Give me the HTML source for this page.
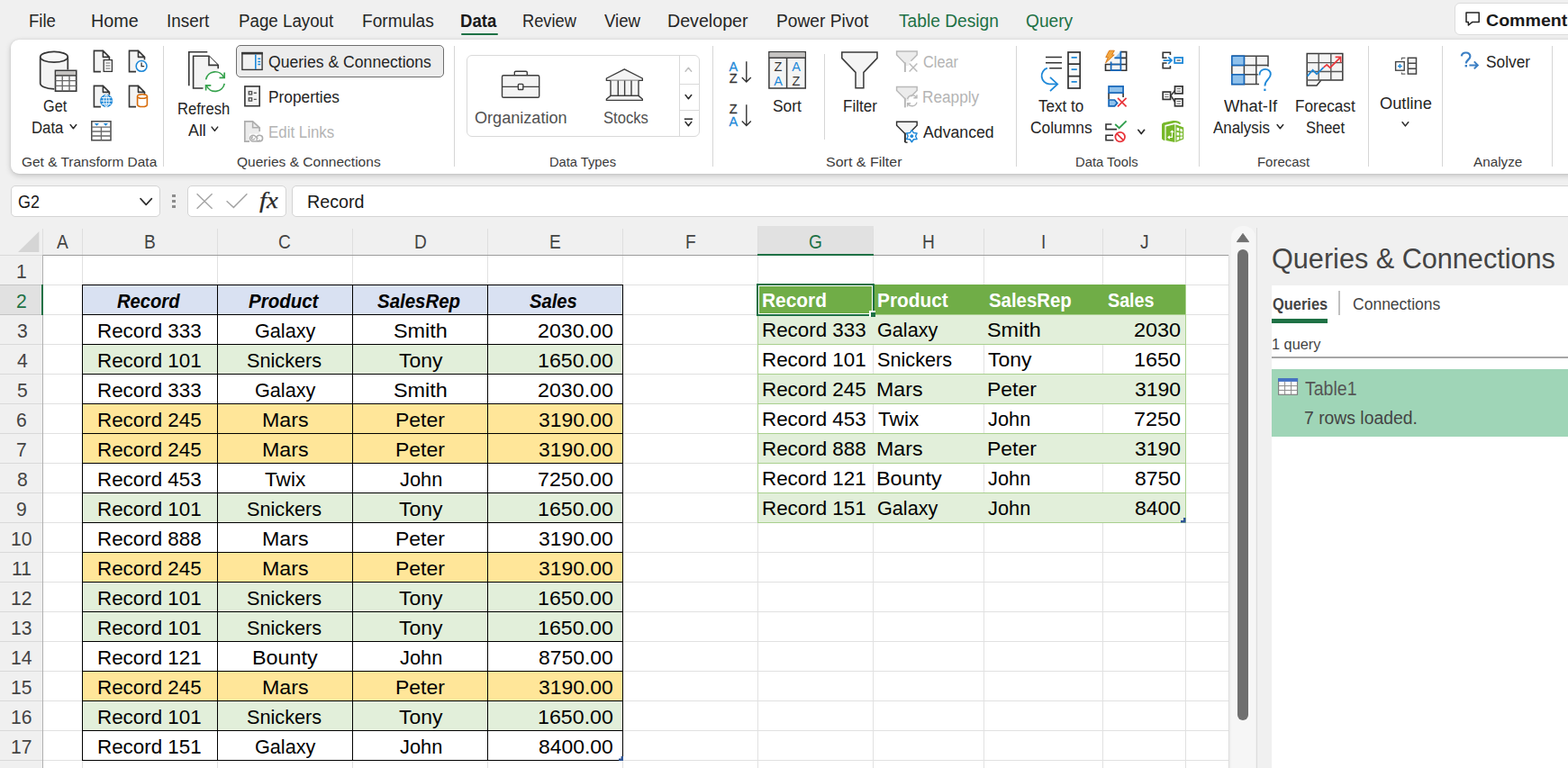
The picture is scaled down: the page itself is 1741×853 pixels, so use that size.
<!DOCTYPE html>
<html><head><meta charset="utf-8"><title>Excel - Queries &amp; Connections</title>
<style>
html,body{margin:0;padding:0;}
body{width:1741px;height:853px;overflow:hidden;background:#f0f0f0;position:relative;font-family:'Liberation Sans',sans-serif;}
.b{position:absolute;}
.t{position:absolute;white-space:nowrap;transform-origin:0 0;}
svg.ic{position:absolute;left:0;top:0;}
</style></head><body>
<div class="b " style="left:12px;top:44px;width:1760px;height:149.4px;background:#fff;border-radius:9px;box-shadow:0 2px 6px rgba(0,0,0,.20),0 0 2px rgba(0,0,0,.10);"></div>
<div class="b " style="left:512px;top:36.5px;width:41px;height:2.6px;background:#1e7145;border-radius:2px;"></div>
<div class="b " style="left:1614.5px;top:3px;width:160px;height:35.5px;background:#fff;border-radius:6px;border:1px solid #dcdcdc;box-sizing:border-box;"></div>
<div class="b " style="left:181px;top:51px;width:1px;height:134px;background:#d6d6d6;"></div>
<div class="b " style="left:504px;top:51px;width:1px;height:134px;background:#d6d6d6;"></div>
<div class="b " style="left:791px;top:51px;width:1px;height:134px;background:#d6d6d6;"></div>
<div class="b " style="left:1128px;top:51px;width:1px;height:134px;background:#d6d6d6;"></div>
<div class="b " style="left:1331px;top:51px;width:1px;height:134px;background:#d6d6d6;"></div>
<div class="b " style="left:1519px;top:51px;width:1px;height:134px;background:#d6d6d6;"></div>
<div class="b " style="left:1601px;top:51px;width:1px;height:134px;background:#d6d6d6;"></div>
<div class="b " style="left:1723px;top:51px;width:1px;height:134px;background:#d6d6d6;"></div>
<div class="b " style="left:914.5px;top:60px;width:1px;height:95px;background:#d6d6d6;"></div>
<div class="b " style="left:262px;top:50px;width:231px;height:35.5px;background:#ececec;border-radius:5px;border:1px solid #6e6e6e;box-sizing:border-box;"></div>
<div class="b " style="left:518px;top:61px;width:258.5px;height:91px;background:#fff;border-radius:6px;border:1px solid #d9d9d9;box-sizing:border-box;"></div>
<div class="b " style="left:753.5px;top:62px;width:1px;height:89.5px;background:#d9d9d9;"></div>
<div class="b " style="left:754px;top:93px;width:21.5px;height:1px;background:#d9d9d9;"></div>
<div class="b " style="left:754px;top:122px;width:21.5px;height:1px;background:#d9d9d9;"></div>
<div class="b " style="left:12.4px;top:206px;width:165.2px;height:34.6px;background:#fff;border-radius:5px;border:1px solid #d4d4d4;box-sizing:border-box;"></div>
<div class="b " style="left:208.2px;top:206px;width:109.6px;height:34.6px;background:#fff;border-radius:5px;border:1px solid #d4d4d4;box-sizing:border-box;"></div>
<div class="b " style="left:324.2px;top:206px;width:1450px;height:34.6px;background:#fff;border-radius:5px;border:1px solid #d4d4d4;box-sizing:border-box;"></div>
<div class="b " style="left:191px;top:216.2px;width:3.8px;height:3px;background:#8c8c8c;"></div>
<div class="b " style="left:191px;top:222.2px;width:3.8px;height:3px;background:#8c8c8c;"></div>
<div class="b " style="left:191px;top:228.2px;width:3.8px;height:3px;background:#8c8c8c;"></div>
<div class="b " style="left:47px;top:283px;width:1317px;height:580px;background:#fff;"></div>
<div class="b " style="left:841px;top:251px;width:129px;height:32px;background:#e1e1e1;"></div>
<div class="b " style="left:0px;top:316px;width:47px;height:33px;background:#e1e1e1;"></div>
<div class="b " style="left:91px;top:283px;width:1px;height:570px;background:#e1e1e1;"></div>
<div class="b " style="left:241px;top:283px;width:1px;height:570px;background:#e1e1e1;"></div>
<div class="b " style="left:391px;top:283px;width:1px;height:570px;background:#e1e1e1;"></div>
<div class="b " style="left:541px;top:283px;width:1px;height:570px;background:#e1e1e1;"></div>
<div class="b " style="left:691px;top:283px;width:1px;height:570px;background:#e1e1e1;"></div>
<div class="b " style="left:841px;top:283px;width:1px;height:570px;background:#e1e1e1;"></div>
<div class="b " style="left:969px;top:283px;width:1px;height:570px;background:#e1e1e1;"></div>
<div class="b " style="left:1092px;top:283px;width:1px;height:570px;background:#e1e1e1;"></div>
<div class="b " style="left:1224px;top:283px;width:1px;height:570px;background:#e1e1e1;"></div>
<div class="b " style="left:1316px;top:283px;width:1px;height:570px;background:#e1e1e1;"></div>
<div class="b " style="left:47px;top:316px;width:1317px;height:1px;background:#e1e1e1;"></div>
<div class="b " style="left:47px;top:349px;width:1317px;height:1px;background:#e1e1e1;"></div>
<div class="b " style="left:47px;top:382px;width:1317px;height:1px;background:#e1e1e1;"></div>
<div class="b " style="left:47px;top:415px;width:1317px;height:1px;background:#e1e1e1;"></div>
<div class="b " style="left:47px;top:448px;width:1317px;height:1px;background:#e1e1e1;"></div>
<div class="b " style="left:47px;top:481px;width:1317px;height:1px;background:#e1e1e1;"></div>
<div class="b " style="left:47px;top:514px;width:1317px;height:1px;background:#e1e1e1;"></div>
<div class="b " style="left:47px;top:547px;width:1317px;height:1px;background:#e1e1e1;"></div>
<div class="b " style="left:47px;top:580px;width:1317px;height:1px;background:#e1e1e1;"></div>
<div class="b " style="left:47px;top:613px;width:1317px;height:1px;background:#e1e1e1;"></div>
<div class="b " style="left:47px;top:646px;width:1317px;height:1px;background:#e1e1e1;"></div>
<div class="b " style="left:47px;top:679px;width:1317px;height:1px;background:#e1e1e1;"></div>
<div class="b " style="left:47px;top:712px;width:1317px;height:1px;background:#e1e1e1;"></div>
<div class="b " style="left:47px;top:745px;width:1317px;height:1px;background:#e1e1e1;"></div>
<div class="b " style="left:47px;top:778px;width:1317px;height:1px;background:#e1e1e1;"></div>
<div class="b " style="left:47px;top:811px;width:1317px;height:1px;background:#e1e1e1;"></div>
<div class="b " style="left:47px;top:844px;width:1317px;height:1px;background:#e1e1e1;"></div>
<div class="b " style="left:47px;top:877px;width:1317px;height:1px;background:#e1e1e1;"></div>
<div class="b " style="left:47px;top:254px;width:1px;height:29px;background:#dedede;"></div>
<div class="b " style="left:91px;top:254px;width:1px;height:29px;background:#dedede;"></div>
<div class="b " style="left:241px;top:254px;width:1px;height:29px;background:#dedede;"></div>
<div class="b " style="left:391px;top:254px;width:1px;height:29px;background:#dedede;"></div>
<div class="b " style="left:541px;top:254px;width:1px;height:29px;background:#dedede;"></div>
<div class="b " style="left:691px;top:254px;width:1px;height:29px;background:#dedede;"></div>
<div class="b " style="left:841px;top:254px;width:1px;height:29px;background:#dedede;"></div>
<div class="b " style="left:969px;top:254px;width:1px;height:29px;background:#dedede;"></div>
<div class="b " style="left:1092px;top:254px;width:1px;height:29px;background:#dedede;"></div>
<div class="b " style="left:1224px;top:254px;width:1px;height:29px;background:#dedede;"></div>
<div class="b " style="left:1316px;top:254px;width:1px;height:29px;background:#dedede;"></div>
<div class="b " style="left:0px;top:283px;width:47px;height:1px;background:#d9d9d9;"></div>
<div class="b " style="left:0px;top:316px;width:47px;height:1px;background:#d9d9d9;"></div>
<div class="b " style="left:0px;top:349px;width:47px;height:1px;background:#d9d9d9;"></div>
<div class="b " style="left:0px;top:382px;width:47px;height:1px;background:#d9d9d9;"></div>
<div class="b " style="left:0px;top:415px;width:47px;height:1px;background:#d9d9d9;"></div>
<div class="b " style="left:0px;top:448px;width:47px;height:1px;background:#d9d9d9;"></div>
<div class="b " style="left:0px;top:481px;width:47px;height:1px;background:#d9d9d9;"></div>
<div class="b " style="left:0px;top:514px;width:47px;height:1px;background:#d9d9d9;"></div>
<div class="b " style="left:0px;top:547px;width:47px;height:1px;background:#d9d9d9;"></div>
<div class="b " style="left:0px;top:580px;width:47px;height:1px;background:#d9d9d9;"></div>
<div class="b " style="left:0px;top:613px;width:47px;height:1px;background:#d9d9d9;"></div>
<div class="b " style="left:0px;top:646px;width:47px;height:1px;background:#d9d9d9;"></div>
<div class="b " style="left:0px;top:679px;width:47px;height:1px;background:#d9d9d9;"></div>
<div class="b " style="left:0px;top:712px;width:47px;height:1px;background:#d9d9d9;"></div>
<div class="b " style="left:0px;top:745px;width:47px;height:1px;background:#d9d9d9;"></div>
<div class="b " style="left:0px;top:778px;width:47px;height:1px;background:#d9d9d9;"></div>
<div class="b " style="left:0px;top:811px;width:47px;height:1px;background:#d9d9d9;"></div>
<div class="b " style="left:0px;top:844px;width:47px;height:1px;background:#d9d9d9;"></div>
<div class="b " style="left:47px;top:283px;width:1317px;height:1px;background:#9b9b9b;"></div>
<div class="b " style="left:47px;top:283px;width:1px;height:570px;background:#b0b0b0;"></div>
<div class="b " style="left:1364px;top:283px;width:1px;height:570px;background:#dcdcdc;"></div>
<div class="b " style="left:0px;top:316px;width:46px;height:1px;background:#c4c4c4;"></div>
<div class="b " style="left:0px;top:349px;width:46px;height:1px;background:#c4c4c4;"></div>
<div class="b " style="left:841px;top:282px;width:129px;height:2px;background:#1e7145;"></div>
<div class="b " style="left:45.5px;top:316px;width:2px;height:34px;background:#1e7145;"></div>
<div class="b " style="left:91px;top:316px;width:601px;height:34px;background:#d9e1f2;"></div>
<div class="b " style="left:91px;top:349px;width:601px;height:34px;background:#ffffff;"></div>
<div class="b " style="left:91px;top:382px;width:601px;height:34px;background:#e2efda;"></div>
<div class="b " style="left:91px;top:415px;width:601px;height:34px;background:#ffffff;"></div>
<div class="b " style="left:91px;top:448px;width:601px;height:34px;background:#ffe699;"></div>
<div class="b " style="left:91px;top:481px;width:601px;height:34px;background:#ffe699;"></div>
<div class="b " style="left:91px;top:514px;width:601px;height:34px;background:#ffffff;"></div>
<div class="b " style="left:91px;top:547px;width:601px;height:34px;background:#e2efda;"></div>
<div class="b " style="left:91px;top:580px;width:601px;height:34px;background:#ffffff;"></div>
<div class="b " style="left:91px;top:613px;width:601px;height:34px;background:#ffe699;"></div>
<div class="b " style="left:91px;top:646px;width:601px;height:34px;background:#e2efda;"></div>
<div class="b " style="left:91px;top:679px;width:601px;height:34px;background:#e2efda;"></div>
<div class="b " style="left:91px;top:712px;width:601px;height:34px;background:#ffffff;"></div>
<div class="b " style="left:91px;top:745px;width:601px;height:34px;background:#ffe699;"></div>
<div class="b " style="left:91px;top:778px;width:601px;height:34px;background:#e2efda;"></div>
<div class="b " style="left:91px;top:811px;width:601px;height:34px;background:#ffffff;"></div>
<div class="b " style="left:91px;top:316px;width:1.3px;height:529px;background:#000;"></div>
<div class="b " style="left:241px;top:316px;width:1.3px;height:529px;background:#000;"></div>
<div class="b " style="left:391px;top:316px;width:1.3px;height:529px;background:#000;"></div>
<div class="b " style="left:541px;top:316px;width:1.3px;height:529px;background:#000;"></div>
<div class="b " style="left:691px;top:316px;width:1.3px;height:529px;background:#000;"></div>
<div class="b " style="left:91px;top:316px;width:601px;height:1.3px;background:#000;"></div>
<div class="b " style="left:91px;top:349px;width:601px;height:1.3px;background:#000;"></div>
<div class="b " style="left:91px;top:382px;width:601px;height:1.3px;background:#000;"></div>
<div class="b " style="left:91px;top:415px;width:601px;height:1.3px;background:#000;"></div>
<div class="b " style="left:91px;top:448px;width:601px;height:1.3px;background:#000;"></div>
<div class="b " style="left:91px;top:481px;width:601px;height:1.3px;background:#000;"></div>
<div class="b " style="left:91px;top:514px;width:601px;height:1.3px;background:#000;"></div>
<div class="b " style="left:91px;top:547px;width:601px;height:1.3px;background:#000;"></div>
<div class="b " style="left:91px;top:580px;width:601px;height:1.3px;background:#000;"></div>
<div class="b " style="left:91px;top:613px;width:601px;height:1.3px;background:#000;"></div>
<div class="b " style="left:91px;top:646px;width:601px;height:1.3px;background:#000;"></div>
<div class="b " style="left:91px;top:679px;width:601px;height:1.3px;background:#000;"></div>
<div class="b " style="left:91px;top:712px;width:601px;height:1.3px;background:#000;"></div>
<div class="b " style="left:91px;top:745px;width:601px;height:1.3px;background:#000;"></div>
<div class="b " style="left:91px;top:778px;width:601px;height:1.3px;background:#000;"></div>
<div class="b " style="left:91px;top:811px;width:601px;height:1.3px;background:#000;"></div>
<div class="b " style="left:91px;top:844px;width:601px;height:1.3px;background:#000;"></div>
<div class="b " style="left:686.5px;top:839.5px;width:5.5px;height:5.5px;background:#2f5597;clip-path:polygon(100% 0,100% 100%,0 100%,0 55%,55% 55%,55% 0);"></div>
<div class="b " style="left:841px;top:316px;width:476px;height:33px;background:#70ad47;"></div>
<div class="b " style="left:841px;top:349px;width:476px;height:33px;background:#e2efda;"></div>
<div class="b " style="left:841px;top:415px;width:476px;height:33px;background:#e2efda;"></div>
<div class="b " style="left:841px;top:481px;width:476px;height:33px;background:#e2efda;"></div>
<div class="b " style="left:841px;top:547px;width:476px;height:33px;background:#e2efda;"></div>
<div class="b " style="left:841px;top:349px;width:476px;height:1px;background:#a9d08e;"></div>
<div class="b " style="left:841px;top:382px;width:476px;height:1px;background:#a9d08e;"></div>
<div class="b " style="left:841px;top:415px;width:476px;height:1px;background:#a9d08e;"></div>
<div class="b " style="left:841px;top:448px;width:476px;height:1px;background:#a9d08e;"></div>
<div class="b " style="left:841px;top:481px;width:476px;height:1px;background:#a9d08e;"></div>
<div class="b " style="left:841px;top:514px;width:476px;height:1px;background:#a9d08e;"></div>
<div class="b " style="left:841px;top:547px;width:476px;height:1px;background:#a9d08e;"></div>
<div class="b " style="left:841px;top:580px;width:476px;height:1px;background:#a9d08e;"></div>
<div class="b " style="left:841px;top:316px;width:1px;height:264px;background:#a9d08e;"></div>
<div class="b " style="left:1316px;top:316px;width:1px;height:265px;background:#a9d08e;"></div>
<div class="b " style="left:840px;top:315px;width:130.6px;height:36px;border:2px solid #1e7145;box-sizing:border-box;box-shadow:inset 0 0 0 1px #fff;"></div>
<div class="b " style="left:965.4px;top:345.4px;width:7px;height:7px;background:#fff;"></div>
<div class="b " style="left:966.5px;top:346.5px;width:5.6px;height:5.6px;background:#1e7145;"></div>
<div class="b " style="left:1311px;top:575px;width:5.5px;height:5.5px;background:#2f5597;clip-path:polygon(100% 0,100% 100%,0 100%,0 55%,55% 55%,55% 0);"></div>
<div class="b " style="left:1367px;top:251px;width:26.5px;height:610px;background:#f6f6f6;border-radius:13px 13px 0 0;"></div>
<div class="b " style="left:1374px;top:277px;width:12px;height:523px;background:#707070;border-radius:6px;"></div>
<div class="b " style="left:1395px;top:253px;width:1px;height:600px;background:#dcdcdc;"></div>
<div class="b " style="left:1412px;top:317px;width:340px;height:540px;background:#fff;"></div>
<div class="b " style="left:1412px;top:354px;width:62px;height:5px;background:#1e7145;"></div>
<div class="b " style="left:1486px;top:323px;width:2px;height:27px;background:#c0c0c0;"></div>
<div class="b " style="left:1412px;top:395.5px;width:340px;height:2px;background:#a6a6a6;"></div>
<div class="b " style="left:1412px;top:410px;width:340px;height:75px;background:#9fd5b7;"></div>
<svg class="ic" width="1741" height="853" viewBox="0 0 1741 853" fill="none" font-family="'Liberation Sans',sans-serif" stroke-linecap="butt">
<path d="M44.7 63.3 V92.6 C44.7 96 51 98.7 60.5 98.9 V78 H75.3 V63.3 Z" stroke="none" fill="#f4f4f4" stroke-width="1.6" />
<ellipse cx="60" cy="63.3" rx="15.3" ry="5.9" stroke="#363636" fill="#f8f8f8" stroke-width="1.7"/>
<path d="M44.7 63.3 V92.6 C44.7 95.8 50.5 98.5 60.3 98.9" stroke="#363636" fill="none" stroke-width="1.7" />
<path d="M75.3 63.3 V77.5" stroke="#363636" fill="none" stroke-width="1.7" />
<rect x="61.5" y="78.4" width="23.2" height="22.8" rx="0" stroke="#3a3a3a" fill="#fff" stroke-width="1.7" />
<rect x="62.2" y="79.3" width="21.8" height="4" rx="0" stroke="none" fill="#c4c2c0" stroke-width="1.6" />
<path d="M61.5 83.9 H84.7" stroke="#3a3a3a" fill="none" stroke-width="1.5" />
<path d="M61.5 89.6 H84.7 M61.5 95.4 H84.7 M69.2 83.8 V101.2 M77 83.8 V101.2" stroke="#6a6a6a" fill="none" stroke-width="1.4" />
<path d="M78.10000000000001 138.5 L81.4 142.7 L84.7 138.5" stroke="#2b2b2b" fill="none" stroke-width="1.5" stroke-linecap="round" stroke-linejoin="round"/>
<path d="M104.4 56.4 H114.4 L121.4 63.4 V79.6 H104.4 Z" fill="#f4f4f4" stroke="none"/>
<path d="M114.4 56.4 H104.4 V79.6 H111.9" stroke="#363636" fill="none" stroke-width="1.6" />
<path d="M114.4 56.4 V63.4 H121.4 Z" stroke="#363636" fill="#fff" stroke-width="1.6" stroke-linejoin="round"/>
<path d="M121.4 63.4 V66.4" stroke="#363636" fill="none" stroke-width="1.6" />
<rect x="115.2" y="66.6" width="9.2" height="12.8" rx="0" stroke="#363636" fill="#fff" stroke-width="1.3" />
<path d="M117.3 70 H122.4 M117.3 73 H122.4 M117.3 76 H122.4" stroke="#666" fill="none" stroke-width="1.2" />
<path d="M143.5 56.4 H153.5 L160.5 63.4 V79.6 H143.5 Z" fill="#f4f4f4" stroke="none"/>
<path d="M153.5 56.4 H143.5 V79.6 H151.0" stroke="#363636" fill="none" stroke-width="1.6" />
<path d="M153.5 56.4 V63.4 H160.5 Z" stroke="#363636" fill="#fff" stroke-width="1.6" stroke-linejoin="round"/>
<path d="M160.5 63.4 V66.4" stroke="#363636" fill="none" stroke-width="1.6" />
<circle cx="157.1" cy="73.4" r="5.9" stroke="#1e88d8" fill="#fff" stroke-width="1.6"/>
<path d="M157.1 69.6 V73.6 H160.2" stroke="#333" fill="none" stroke-width="1.3" />
<path d="M104.4 95.4 H114.4 L121.4 102.4 V118.60000000000001 H104.4 Z" fill="#f4f4f4" stroke="none"/>
<path d="M114.4 95.4 H104.4 V118.60000000000001 H111.9" stroke="#363636" fill="none" stroke-width="1.6" />
<path d="M114.4 95.4 V102.4 H121.4 Z" stroke="#363636" fill="#fff" stroke-width="1.6" stroke-linejoin="round"/>
<path d="M121.4 102.4 V105.4" stroke="#363636" fill="none" stroke-width="1.6" />
<circle cx="118.1" cy="112" r="6.7" stroke="#1e88d8" fill="#1e88d8" stroke-width="0.8"/>
<path d="M111.6 112 H124.6 M118.1 105.5 V118.5 M113 108.6 H123.2 M113 115.4 H123.2" stroke="#fff" fill="none" stroke-width="1.0" />
<ellipse cx="118.1" cy="112" rx="3.1" ry="6.4" stroke="#fff" fill="none" stroke-width="1.0"/>
<path d="M143.5 95.4 H153.5 L160.5 102.4 V118.60000000000001 H143.5 Z" fill="#f4f4f4" stroke="none"/>
<path d="M153.5 95.4 H143.5 V118.60000000000001 H151.0" stroke="#363636" fill="none" stroke-width="1.6" />
<path d="M153.5 95.4 V102.4 H160.5 Z" stroke="#363636" fill="#fff" stroke-width="1.6" stroke-linejoin="round"/>
<path d="M160.5 102.4 V105.4" stroke="#363636" fill="none" stroke-width="1.6" />
<path d="M152.6 107 V116 C152.6 119.4 163.4 119.4 163.4 116 V107" stroke="#d86c0a" fill="#fff" stroke-width="1.6" />
<ellipse cx="158" cy="107" rx="5.4" ry="2.3" stroke="#d86c0a" fill="#fff" stroke-width="1.6"/>
<rect x="101.8" y="134.8" width="21.2" height="21" rx="0" stroke="#4a4a4a" fill="#fff" stroke-width="1.5" />
<path d="M101.8 141.2 H123 M101.8 146 H123 M101.8 151 H123 M112.4 141.2 V155.8" stroke="#6a6a6a" fill="none" stroke-width="1.3" />
<path d="M104.8 136.9 H110 L107.4 139.8 Z M114.8 136.9 H120 L117.4 139.8 Z" stroke="none" fill="#1e88d8" stroke-width="1.6" />
<path d="M230.3 57.7 H209.8 V95.3" stroke="#363636" fill="none" stroke-width="1.6" />
<path d="M214.6 62.2 H232 L242.2 72.4 V98 H214.6 Z" fill="#f4f4f4"/>
<path d="M225.5 98 H214.6 V62.2 H232 L242.2 72.4 V76.2" stroke="#363636" fill="none" stroke-width="1.6" />
<path d="M232 62.2 V72.4 H242.2" stroke="#363636" fill="#fff" stroke-width="1.6" />
<circle cx="238.9" cy="90.6" r="10.6" stroke="none" fill="#fff" stroke-width="1.35"/>
<path d="M228.6 88.4 A10.5 10.5 0 0 1 248.6 86.2" stroke="#35a24c" fill="none" stroke-width="1.7" />
<path d="M243.5 86.4 H249.2 V80.6" stroke="#35a24c" fill="none" stroke-width="1.7" />
<path d="M249.2 92.8 A10.5 10.5 0 0 1 229.2 95" stroke="#35a24c" fill="none" stroke-width="1.7" />
<path d="M234.3 94.8 H228.6 V100.6" stroke="#35a24c" fill="none" stroke-width="1.7" />
<path d="M235.1 141.1 L238.4 145.29999999999998 L241.70000000000002 141.1" stroke="#2b2b2b" fill="none" stroke-width="1.5" stroke-linecap="round" stroke-linejoin="round"/>
<rect x="268.9" y="58.6" width="22.2" height="18.8" rx="0" stroke="#363636" fill="#f2f2f2" stroke-width="1.4" />
<path d="M268.3 59.2 H291.7" stroke="#363636" fill="none" stroke-width="2.6" />
<path d="M283.8 60.5 V77" stroke="#1e88d8" fill="none" stroke-width="1.6" />
<path d="M286.3 65.2 H289.2 M286.3 68.4 H289.2 M286.3 71.6 H289.2" stroke="#1e88d8" fill="none" stroke-width="1.5" />
<rect x="271.9" y="95.9" width="16.3" height="21.8" rx="0" stroke="#363636" fill="#f4f4f4" stroke-width="1.6" />
<rect x="276.3" y="101.6" width="3.3" height="3.3" rx="0" stroke="#555" fill="none" stroke-width="1.4" />
<rect x="276.3" y="108.8" width="3.3" height="3.3" rx="0" stroke="#555" fill="none" stroke-width="1.4" />
<path d="M281.8 103.2 H284.8 M281.8 110.4 H284.8" stroke="#555" fill="none" stroke-width="1.4" />
<path d="M271.6 134.8 H280.8 L288.4 141.6 V157.2 H271.6 Z" fill="#ececec"/>
<path d="M277.8 157.2 H271.8 V134.9 H280.6 L288.2 141.8 V146" stroke="#adadad" fill="none" stroke-width="1.7" />
<path d="M280.6 134.9 V141.8 H288.2" stroke="#adadad" fill="none" stroke-width="1.5" />
<rect x="277" y="148.6" width="15" height="9.6" fill="#fff"/>
<path d="M284.4 153.6 A3.4 3.4 0 1 0 281 157 H288.2 A3.4 3.4 0 1 0 284.8 153.2" stroke="#adadad" fill="none" stroke-width="1.6" />
<path d="M282.6 153.6 A1.6 1.6 0 1 1 281 152 M286.6 153.4 A1.6 1.6 0 1 0 288.2 155" stroke="#adadad" fill="none" stroke-width="1.3" />
<rect x="557.5" y="83.7" width="41.2" height="24.6" rx="1.6" stroke="#3d3d3d" fill="#f4f4f4" stroke-width="1.4" />
<path d="M571.3 83.7 V80.6 Q571.3 79.3 572.6 79.3 H584 Q585.3 79.3 585.3 80.6 V83.7" stroke="#3d3d3d" fill="none" stroke-width="1.4" />
<path d="M557.5 96.4 H575.4 M580.8 96.4 H598.7" stroke="#3d3d3d" fill="none" stroke-width="1.4" />
<rect x="575.4" y="93.4" width="5.4" height="6.1" rx="0.8" stroke="#3d3d3d" fill="#fff" stroke-width="1.4" />
<path d="M693.3 76.8 L673.4 87 V89.4 H713.3 V87 Z" stroke="#3d3d3d" fill="#f4f4f4" stroke-width="1.4" stroke-linejoin="round"/>
<path d="M678 89.4 V106.4 H709 V89.4" stroke="#3d3d3d" fill="#f4f4f4" stroke-width="1.4" />
<path d="M686.3 89.4 V106.4 M693.6 89.4 V106.4 M701 89.4 V106.4" stroke="#3d3d3d" fill="none" stroke-width="1.4" />
<path d="M678 106.4 H709 L713.3 110 V111.4 H673.4 V110 Z" stroke="#3d3d3d" fill="#f4f4f4" stroke-width="1.4" stroke-linejoin="round"/>
<path d="M761.1 79.2 L764.4 75.2 L767.6999999999999 79.2" stroke="#bdbdbd" fill="none" stroke-width="1.4" stroke-linecap="round" stroke-linejoin="round"/>
<path d="M761.1 105.5 L764.4 109.69999999999999 L767.6999999999999 105.5" stroke="#2b2b2b" fill="none" stroke-width="1.5" stroke-linecap="round" stroke-linejoin="round"/>
<path d="M759.8 132.2 H769" stroke="#2b2b2b" fill="none" stroke-width="1.5" />
<path d="M761.1 135.5 L764.4 139.7 L767.6999999999999 135.5" stroke="#2b2b2b" fill="none" stroke-width="1.5" stroke-linecap="round" stroke-linejoin="round"/>
<text x="809.6" y="78.7" font-size="14.5" fill="#1e88d8" font-weight="400" text-anchor="start" stroke="#1e88d8" stroke-width="0.3">A</text>
<text x="809.8" y="91.6" font-size="14.5" fill="#333" font-weight="400" text-anchor="start" stroke="#333" stroke-width="0.3">Z</text>
<path d="M828.8 68.3 V91 M823.8 86 L828.8 91 L833.8 86" stroke="#333" fill="none" stroke-width="1.4" stroke-linejoin="miter"/>
<text x="809.8" y="126.3" font-size="14.5" fill="#333" font-weight="400" text-anchor="start" stroke="#333" stroke-width="0.3">Z</text>
<text x="809.6" y="140" font-size="14.5" fill="#1e88d8" font-weight="400" text-anchor="start" stroke="#1e88d8" stroke-width="0.3">A</text>
<path d="M828.8 116.2 V139.6 M823.8 134.6 L828.8 139.6 L833.8 134.6" stroke="#333" fill="none" stroke-width="1.4" stroke-linejoin="miter"/>
<rect x="853.9" y="57.7" width="40.4" height="40.3" rx="0" stroke="#3a3a3a" fill="#f4f4f4" stroke-width="1.5" />
<rect x="854.6" y="58.4" width="39" height="5.4" rx="0" stroke="none" fill="#c6c4c2" stroke-width="1.6" />
<path d="M853.9 64.2 H894.3 M873.6 64.2 V98" stroke="#3a3a3a" fill="none" stroke-width="1.5" />
<text x="864" y="79" font-size="14.5" fill="#333" font-weight="400" text-anchor="middle" >Z</text>
<text x="864" y="94.6" font-size="14.5" fill="#1e88d8" font-weight="400" text-anchor="middle" >A</text>
<text x="884" y="79" font-size="14.5" fill="#1e88d8" font-weight="400" text-anchor="middle" >A</text>
<text x="884" y="94.6" font-size="14.5" fill="#333" font-weight="400" text-anchor="middle" >Z</text>
<path d="M934.8 58 H974 V64.6 L958.9 80.4 V97.8 H950 V80.4 L934.8 64.6 Z" stroke="#3a3a3a" fill="#f4f4f4" stroke-width="1.5" stroke-linejoin="miter"/>
<path d="M995.6 57 H1018.2 V61 L1009 70.2 V73 H1004.6 V70.4 L995.6 61 Z" fill="#ececec"/>
<path d="M1011.4 67.8 L1018.2 61 V57 H995.6 V61 L1004.9 70.4" stroke="#b9b9b9" fill="none" stroke-width="1.45" />
<path d="M1004.9 69.4 V80" stroke="#b9b9b9" fill="none" stroke-width="2" />
<path d="M1009.6 70.6 L1018.4 79.4 M1018.4 70.6 L1009.6 79.4" stroke="#b9b9b9" fill="none" stroke-width="1.4" />
<path d="M995.6 96.4 H1018.2 V100.4 L1009 109.60000000000001 V112.4 H1004.6 V109.80000000000001 L995.6 100.4 Z" fill="#ececec"/>
<path d="M1011.4 107.2 L1018.2 100.4 V96.4 H995.6 V100.4 L1004.9 109.80000000000001" stroke="#b9b9b9" fill="none" stroke-width="1.45" />
<path d="M1004.9 108.80000000000001 V119.4" stroke="#b9b9b9" fill="none" stroke-width="2" />
<path d="M1007.6 110 A5.4 5.4 0 0 1 1017.6 108.6 M1014.4 108.8 H1018 V105.2 M1018 113.6 A5.4 5.4 0 0 1 1008 115 M1011.2 114.8 H1007.6 V118.4" stroke="#b9b9b9" fill="none" stroke-width="1.4" />
<path d="M995.6 135.2 H1018.2 V139.2 L1009 148.39999999999998 V151.2 H1004.6 V148.6 L995.6 139.2 Z" fill="#f4f4f4"/>
<path d="M1011.4 146.0 L1018.2 139.2 V135.2 H995.6 V139.2 L1004.9 148.6" stroke="#333" fill="none" stroke-width="1.45" />
<path d="M1004.9 147.6 V158.2" stroke="#333" fill="none" stroke-width="2" />
<path d="M1005.2 158.2 H1007.6" stroke="#333" fill="none" stroke-width="1.45" />
<circle cx="1012.4" cy="151.2" r="6.4" fill="#fff"/>
<path d="M1012.4 144.6 L1014.5 147.6 L1018.1 147.9 L1016.6 151.2 L1018.1 154.5 L1014.5 154.8 L1012.4 157.8 L1010.3 154.8 L1006.7 154.5 L1008.2 151.2 L1006.7 147.9 L1010.3 147.6 Z" stroke="#1e88d8" fill="#fff" stroke-width="1.5" stroke-linejoin="round"/>
<circle cx="1012.4" cy="151.2" r="1.5" stroke="#1e88d8" fill="#1e88d8" stroke-width="1"/>
<path d="M1161 63.6 H1179 M1161 69.7 H1179 M1165.2 75.7 H1179" stroke="#333" fill="none" stroke-width="1.5" />
<path d="M1162.8 75.7 A9.1 9.1 0 0 0 1165 93.4 H1173.8" stroke="#1e88d8" fill="none" stroke-width="1.8" />
<path d="M1166 85.8 L1174.2 93.4 L1166 101.2" stroke="#1e88d8" fill="none" stroke-width="1.8" />
<rect x="1186" y="58" width="13.2" height="40" rx="0" stroke="#333" fill="#f8f8f8" stroke-width="1.7" />
<path d="M1186 71.2 H1199.2 M1186 84.6 H1199.2" stroke="#333" fill="none" stroke-width="1.7" />
<path d="M1189.6 63.8 H1195.8 M1189.6 77.2 H1195.8 M1189.6 90.8 H1195.8" stroke="#1e88d8" fill="none" stroke-width="1.8" />
<rect x="1227.4" y="57.5" width="23.4" height="20.8" fill="#f6f6f6"/>
<path d="M1244.6 57.6 H1250.7 V78.2 H1227.5 V71.5 H1250.7 M1244.6 64.4 H1250.7" stroke="#333" fill="none" stroke-width="1.6" />
<path d="M1244.4 57.2 L1237.6 64.2 H1244.4 Z" stroke="none" fill="#8fc1ec" stroke-width="1.6" />
<path d="M1244.4 56.8 V78.2 H1233.6 V68.4 M1237.4 64.4 H1244.4 M1233.6 71.5 H1244.4" stroke="#1565b8" fill="none" stroke-width="1.7" />
<path d="M1231.6 56.2 H1237.4 L1234.6 61 H1237.2 L1227.6 69.8 L1230.4 63.6 H1227.8 Z" stroke="#d9730d" fill="#f3a73f" stroke-width="0.9" />
<path d="M1231.1 103 V110.6 M1247.1 103 V108" stroke="#333" fill="none" stroke-width="1.6" />
<rect x="1231.1" y="95.9" width="16" height="7.2" rx="0" stroke="#1565b8" fill="#8fc1ec" stroke-width="1.7" />
<path d="M1231.1 111 H1237.6 L1240.6 114.4 L1237.6 117.8 H1231.1 Z" stroke="#1565b8" fill="#8fc1ec" stroke-width="1.7" />
<path d="M1241 108.8 L1250.6 118.4 M1250.6 108.8 L1241 118.4" stroke="#e8343a" fill="none" stroke-width="1.7" />
<path d="M1234.4 138 H1228 V143.6 H1240" stroke="#333" fill="none" stroke-width="1.6" />
<path d="M1236 150.2 H1228 V155.8 H1236.4" stroke="#333" fill="none" stroke-width="1.6" />
<path d="M1238.2 138 L1242.7 142.2 L1250.6 134.4" stroke="#2f9e4c" fill="none" stroke-width="1.8" />
<circle cx="1243.7" cy="152.1" r="5.3" stroke="#e8343a" fill="#fff" stroke-width="1.8"/>
<path d="M1240 148.4 L1247.4 155.8" stroke="#e8343a" fill="none" stroke-width="1.8" />
<path d="M1263.8 144.3 L1267.2 148.5 L1270.6000000000001 144.3" stroke="#2b2b2b" fill="none" stroke-width="1.7" stroke-linecap="round" stroke-linejoin="round"/>
<path d="M1299.4 61 V58.3 H1291.2 V64.2 H1295.6 M1295.6 70 H1291.2 V75.8 H1299.4 V73" stroke="#333" fill="none" stroke-width="1.6" />
<path d="M1291.6 67.1 H1300.6 M1297.2 63.4 L1301 67.1 L1297.2 70.8" stroke="#1e88d8" fill="none" stroke-width="1.7" />
<rect x="1304.2" y="64" width="8.9" height="6" rx="0" stroke="#1e88d8" fill="#fff" stroke-width="1.8" />
<path d="M1306.6 67 H1310.8" stroke="#555" fill="none" stroke-width="1.3" />
<path d="M1300 106.2 L1304.4 100.6 M1300 106.2 L1304.4 113" stroke="#333" fill="none" stroke-width="1.5" />
<rect x="1291.2" y="102.1" width="8.4" height="8.3" rx="0" stroke="#333" fill="#fff" stroke-width="1.7" />
<rect x="1304.5" y="95.9" width="8.6" height="8" rx="0" stroke="#333" fill="#fff" stroke-width="1.7" />
<rect x="1304.5" y="109.8" width="8.6" height="8" rx="0" stroke="#333" fill="#fff" stroke-width="1.7" />
<path d="M1293.2 104.9 H1297.6 M1293.2 107.6 H1297.6 M1306.6 98.6 H1311 M1306.6 101.2 H1311 M1306.6 112.5 H1311 M1306.6 115.1 H1311" stroke="#666" fill="none" stroke-width="1" />
<path d="M1290 138.6 Q1290 136.8 1291.8 136.2 L1302.4 134 Q1308.6 133.4 1311.4 137.2 L1309.6 138 Q1307.6 135.8 1303.6 136.4 L1293.4 139 V156.2 L1291.4 155.6 Q1290 155 1290 153.6 Z" stroke="none" fill="#77b82a" stroke-width="1.6" />
<path d="M1294.6 140.4 L1304.4 138 V158 L1294.6 156 Z" stroke="none" fill="#77b82a" stroke-width="1.6" />
<path d="M1305.4 138.2 L1314.2 141.4 V154.6 L1305.4 158 Z" stroke="none" fill="#77b82a" stroke-width="1.6" />
<path d="M1306.6 141.4 L1309.2 142.3 V145.6 L1306.6 145 Z M1310.4 142.8 L1313 143.7 V146.6 L1310.4 146 Z M1306.6 146.8 L1309.2 147.2 V150.4 L1306.6 150.4 Z M1310.4 147.4 L1313 147.8 V150.4 L1310.4 150.4 Z M1306.6 152.2 L1309.2 151.9 V155 L1306.6 155.9 Z M1310.4 151.8 L1313 151.5 V153.8 L1310.4 154.6 Z" stroke="none" fill="#fff" stroke-width="1.6" />
<path d="M1297.4 152.4 H1301.4 V145.6 M1299.6 147.2 L1301.4 145.2 L1303.2 147.2 M1298.8 150.8 L1297 152.4 L1298.8 154" stroke="#fff" fill="none" stroke-width="1.1" />
<rect x="1367.8" y="62.2" width="40.2" height="31.4" rx="0" stroke="none" fill="#f4f4f4" stroke-width="0" />
<path d="M1367.8 62.2 H1408 V74 M1400 93.6 H1367.8 V62.2 M1381.4 62.2 V93.6 M1394.8 62.2 V93.6 M1367.8 72.5 H1408 M1367.8 82.8 H1400" stroke="#444" fill="none" stroke-width="1.5" />
<rect x="1367.8" y="62.2" width="13.6" height="10.3" rx="0" stroke="#1565b8" fill="#8fc1ec" stroke-width="1.6" />
<rect x="1367.8" y="82.8" width="13.6" height="10.8" rx="0" stroke="#1565b8" fill="#8fc1ec" stroke-width="1.6" />
<path d="M1396 76 H1413 V102 H1399 Z" fill="#fff"/>
<path d="M1398.4 83.4 C1398.6 74.6 1411 75 1410.8 82.6 C1410.8 88 1404.4 88.4 1404.4 95.4" stroke="#1e88d8" fill="none" stroke-width="1.9" />
<path d="M1404.4 98.6 V101" stroke="#1e88d8" fill="none" stroke-width="2.2" />
<path d="M1451.2 59.4 H1490.8 V89 H1466.8 L1462 95 H1451.2 Z" stroke="#3a3a3a" fill="#f4f4f4" stroke-width="1.5" />
<path d="M1451.2 89 H1466.8 M1464.2 59.4 V89 M1477.8 59.4 V89 M1451.2 69.6 H1490.8 M1451.2 79.5 H1490.8" stroke="#555" fill="none" stroke-width="1.4" />
<path d="M1451.6 84.6 L1457.6 77.8 L1462 82.4 L1469.6 74.8" stroke="#1e88d8" fill="none" stroke-width="1.7" />
<path d="M1469.6 74.8 L1473.2 71.8 L1476.8 75.2 L1488.2 63.8 M1482.6 63.4 H1488.6 V69.4" stroke="#e8383c" fill="none" stroke-width="1.7" />
<path d="M1418.1000000000001 138.5 L1421.4 142.7 L1424.7 138.5" stroke="#2b2b2b" fill="none" stroke-width="1.5" stroke-linecap="round" stroke-linejoin="round"/>
<rect x="1549.6" y="68.6" width="9.6" height="9.6" rx="0" stroke="#444" fill="#fff" stroke-width="1.4" />
<path d="M1552 73.4 H1556.8 M1554.4 71 V75.8" stroke="#1e88d8" fill="none" stroke-width="1.5" />
<rect x="1563.3" y="64.3" width="9.2" height="17.8" rx="0" stroke="#444" fill="#f4f4f4" stroke-width="1.5" />
<path d="M1563.3 70.2 H1572.5 M1563.3 76.2 H1572.5" stroke="#444" fill="none" stroke-width="1.4" />
<path d="M1560.4 64.3 H1556.4 V66.4 M1556.4 80.4 V82.2 H1560.4" stroke="#666" fill="none" stroke-width="1.2" />
<path d="M1557.1000000000001 135.70000000000002 L1560.4 139.9 L1563.7 135.70000000000002" stroke="#2b2b2b" fill="none" stroke-width="1.5" stroke-linecap="round" stroke-linejoin="round"/>
<path d="M1622.8 62.4 C1623.4 57 1632.6 57.4 1632.4 62.6 C1632.4 66.2 1627.8 66.6 1627.8 70.4" stroke="#3b7fc4" fill="none" stroke-width="2.2" />
<path d="M1626.6 73.2 H1629" stroke="#3b7fc4" fill="none" stroke-width="2.4" />
<path d="M1631.4 72.4 H1640.6 M1636.8 68.4 L1640.8 72.4 L1636.8 76.4" stroke="#3b7fc4" fill="none" stroke-width="2" />
<path d="M1628 14 H1642.2 V24.6 H1634.6 L1630.4 28 V24.6 H1628 Z" stroke="#242424" fill="none" stroke-width="1.5" stroke-linejoin="round"/>
<path d="M156.0 220.6 L162.2 227.4 L168.39999999999998 220.6" stroke="#2b2b2b" fill="none" stroke-width="1.6" stroke-linecap="round" stroke-linejoin="round"/>
<path d="M218.6 215.2 L235.6 231.8 M235.6 215.2 L218.6 231.8" stroke="#a6a6a6" fill="none" stroke-width="1.5" />
<path d="M251.6 223.2 L259.4 230.4 L274.4 215.2" stroke="#a6a6a6" fill="none" stroke-width="1.5" />
<path d="M43.4 257 V280 H20 Z" stroke="none" fill="#d5d5d5" stroke-width="1.6" />
<path d="M1380 259.4 L1386.6 268.6 H1373.4 Z" stroke="#707070" fill="#707070" stroke-width="1" stroke-linejoin="round"/>
<rect x="1419.6" y="420.8" width="20.9" height="17.5" rx="0" stroke="#7f7f7f" fill="#fff" stroke-width="1.2" />
<rect x="1419" y="420.1" width="22.1" height="3.8" rx="0" stroke="none" fill="#4472c4" stroke-width="1.6" />
<path d="M1419.6 428.6 H1440.5 M1419.6 433.4 H1440.5 M1426.6 423.9 V438.2 M1433.6 423.9 V438.2" stroke="#8a8a8a" fill="none" stroke-width="1" />
</svg>
<span class="t" style="left:31.95px;top:14px;font-size:19.6px;line-height:19.6px;color:#262626;transform:scaleX(0.9487);">File</span>
<span class="t" style="left:100.99px;top:14px;font-size:19.6px;line-height:19.6px;color:#262626;transform:scaleX(1.0084);">Home</span>
<span class="t" style="left:185.04px;top:14px;font-size:19.6px;line-height:19.6px;color:#262626;transform:scaleX(0.9638);">Insert</span>
<span class="t" style="left:265.04px;top:14px;font-size:19.6px;line-height:19.6px;color:#262626;transform:scaleX(0.9563);">Page Layout</span>
<span class="t" style="left:402.42px;top:14px;font-size:19.6px;line-height:19.6px;color:#262626;transform:scaleX(0.9770);">Formulas</span>
<span class="t" style="left:579.87px;top:14px;font-size:19.6px;line-height:19.6px;color:#262626;transform:scaleX(0.9314);">Review</span>
<span class="t" style="left:670.60px;top:14px;font-size:19.6px;line-height:19.6px;color:#262626;transform:scaleX(0.9519);">View</span>
<span class="t" style="left:740.80px;top:14px;font-size:19.6px;line-height:19.6px;color:#262626;transform:scaleX(1.0024);">Developer</span>
<span class="t" style="left:861.82px;top:14px;font-size:19.6px;line-height:19.6px;color:#262626;transform:scaleX(0.9779);">Power Pivot</span>
<span class="t" style="left:511.45px;top:14px;font-size:19.6px;line-height:19.6px;color:#1a1a1a;transform:scaleX(0.9466);font-weight:700;">Data</span>
<span class="t" style="left:997.60px;top:14px;font-size:19.6px;line-height:19.6px;color:#1e7145;transform:scaleX(0.9788);">Table Design</span>
<span class="t" style="left:1138.80px;top:14px;font-size:19.6px;line-height:19.6px;color:#1e7145;transform:scaleX(0.9783);">Query</span>
<span class="t" style="left:1650.20px;top:14px;font-size:18.8px;line-height:18.8px;color:#1a1a1a;transform:scaleX(1.0434);font-weight:700;">Comments</span>
<span class="t" style="left:47.70px;top:110px;font-size:17.6px;line-height:17.6px;color:#242424;transform:scaleX(0.9238);">Get</span>
<span class="t" style="left:34.55px;top:134px;font-size:17.6px;line-height:17.6px;color:#242424;transform:scaleX(0.9539);">Data</span>
<span class="t" style="left:197.06px;top:113px;font-size:17.6px;line-height:17.6px;color:#242424;transform:scaleX(0.9445);">Refresh</span>
<span class="t" style="left:208.70px;top:137px;font-size:17.6px;line-height:17.6px;color:#242424;transform:scaleX(1.0137);">All</span>
<span class="t" style="left:298.20px;top:61px;font-size:17.6px;line-height:17.6px;color:#242424;transform:scaleX(0.9999);">Queries &amp; Connections</span>
<span class="t" style="left:297.81px;top:100px;font-size:17.6px;line-height:17.6px;color:#242424;transform:scaleX(0.9850);">Properties</span>
<span class="t" style="left:297.84px;top:139px;font-size:17.6px;line-height:17.6px;color:#b4b4b4;transform:scaleX(0.9592);">Edit Links</span>
<span class="t" style="left:527.00px;top:123px;font-size:17.6px;line-height:17.6px;color:#505050;transform:scaleX(1.0286);">Organization</span>
<span class="t" style="left:669.50px;top:123px;font-size:17.6px;line-height:17.6px;color:#505050;transform:scaleX(0.9434);">Stocks</span>
<span class="t" style="left:858.00px;top:110px;font-size:17.6px;line-height:17.6px;color:#242424;transform:scaleX(0.9883);">Sort</span>
<span class="t" style="left:936.03px;top:110px;font-size:17.6px;line-height:17.6px;color:#242424;transform:scaleX(0.9676);">Filter</span>
<span class="t" style="left:1025.10px;top:61px;font-size:17.6px;line-height:17.6px;color:#b4b4b4;transform:scaleX(0.9269);">Clear</span>
<span class="t" style="left:1024.12px;top:100px;font-size:17.6px;line-height:17.6px;color:#b4b4b4;transform:scaleX(0.9788);">Reapply</span>
<span class="t" style="left:1025.10px;top:139px;font-size:17.6px;line-height:17.6px;color:#242424;transform:scaleX(1.0056);">Advanced</span>
<span class="t" style="left:1153.10px;top:110px;font-size:17.6px;line-height:17.6px;color:#242424;transform:scaleX(0.9704);">Text to</span>
<span class="t" style="left:1143.90px;top:134px;font-size:17.6px;line-height:17.6px;color:#242424;transform:scaleX(0.9896);">Columns</span>
<span class="t" style="left:1358.50px;top:110px;font-size:17.6px;line-height:17.6px;color:#242424;transform:scaleX(1.0438);">What-If</span>
<span class="t" style="left:1347.30px;top:134px;font-size:17.6px;line-height:17.6px;color:#242424;transform:scaleX(0.9617);">Analysis</span>
<span class="t" style="left:1437.53px;top:110px;font-size:17.6px;line-height:17.6px;color:#242424;transform:scaleX(0.9740);">Forecast</span>
<span class="t" style="left:1449.80px;top:134px;font-size:17.6px;line-height:17.6px;color:#242424;transform:scaleX(0.9373);">Sheet</span>
<span class="t" style="left:1532.30px;top:107px;font-size:17.6px;line-height:17.6px;color:#242424;transform:scaleX(1.0371);">Outline</span>
<span class="t" style="left:1649.60px;top:61px;font-size:17.6px;line-height:17.6px;color:#242424;transform:scaleX(0.9838);">Solver</span>
<span class="t" style="left:23.50px;top:172px;font-size:15.3px;line-height:15.3px;color:#3b3b3b;transform:scaleX(1.0098);">Get &amp; Transform Data</span>
<span class="t" style="left:262.50px;top:172px;font-size:15.3px;line-height:15.3px;color:#3b3b3b;transform:scaleX(1.0149);">Queries &amp; Connections</span>
<span class="t" style="left:609.84px;top:172px;font-size:15.3px;line-height:15.3px;color:#3b3b3b;transform:scaleX(0.9606);">Data Types</span>
<span class="t" style="left:916.80px;top:172px;font-size:15.3px;line-height:15.3px;color:#3b3b3b;transform:scaleX(1.0464);">Sort &amp; Filter</span>
<span class="t" style="left:1194.03px;top:172px;font-size:15.3px;line-height:15.3px;color:#3b3b3b;transform:scaleX(0.9676);">Data Tools</span>
<span class="t" style="left:1395.52px;top:172px;font-size:15.3px;line-height:15.3px;color:#3b3b3b;transform:scaleX(0.9754);">Forecast</span>
<span class="t" style="left:1635.50px;top:172px;font-size:15.3px;line-height:15.3px;color:#3b3b3b;transform:scaleX(0.9979);">Analyze</span>
<span class="t" style="left:19.80px;top:215px;font-size:19.5px;line-height:19.5px;color:#1a1a1a;transform:scaleX(0.9218);">G2</span>
<span class="t" style="left:340.99px;top:215px;font-size:19.5px;line-height:19.5px;color:#1a1a1a;transform:scaleX(1.0112);">Record</span>
<span class="t" style="left:288.20px;top:210px;font-size:25.5px;line-height:25.5px;color:#2a2a2a;transform:scaleX(1.1318);font-family:'Liberation Serif',serif;-webkit-text-stroke:0.25px #2a2a2a;font-style:italic;">fx</span>
<span class="t" style="left:63.07px;top:258px;font-size:22px;line-height:22px;color:#444444;transform:scaleX(0.8700);">A</span>
<span class="t" style="left:160.07px;top:258px;font-size:22px;line-height:22px;color:#444444;transform:scaleX(0.8700);">B</span>
<span class="t" style="left:309.21px;top:258px;font-size:22px;line-height:22px;color:#444444;transform:scaleX(0.8700);">C</span>
<span class="t" style="left:459.64px;top:258px;font-size:22px;line-height:22px;color:#444444;transform:scaleX(0.8700);">D</span>
<span class="t" style="left:610.08px;top:258px;font-size:22px;line-height:22px;color:#444444;transform:scaleX(0.8700);">E</span>
<span class="t" style="left:760.51px;top:258px;font-size:22px;line-height:22px;color:#444444;transform:scaleX(0.8700);">F</span>
<span class="t" style="left:898.21px;top:258px;font-size:22px;line-height:22px;color:#1e7145;transform:scaleX(0.8700);">G</span>
<span class="t" style="left:1024.14px;top:258px;font-size:22px;line-height:22px;color:#444444;transform:scaleX(0.8700);">H</span>
<span class="t" style="left:1155.55px;top:258px;font-size:22px;line-height:22px;color:#444444;transform:scaleX(0.8700);">I</span>
<span class="t" style="left:1266.25px;top:258px;font-size:22px;line-height:22px;color:#444444;transform:scaleX(0.8700);">J</span>
<span class="t" style="left:18.16px;top:291px;font-size:22px;line-height:22px;color:#444444;transform:scaleX(0.9600);">1</span>
<span class="t" style="left:18.16px;top:324px;font-size:22px;line-height:22px;color:#1e7145;transform:scaleX(0.9600);">2</span>
<span class="t" style="left:18.64px;top:357px;font-size:22px;line-height:22px;color:#444444;transform:scaleX(0.9600);">3</span>
<span class="t" style="left:18.64px;top:390px;font-size:22px;line-height:22px;color:#444444;transform:scaleX(0.9600);">4</span>
<span class="t" style="left:18.64px;top:423px;font-size:22px;line-height:22px;color:#444444;transform:scaleX(0.9600);">5</span>
<span class="t" style="left:18.16px;top:456px;font-size:22px;line-height:22px;color:#444444;transform:scaleX(0.9600);">6</span>
<span class="t" style="left:18.16px;top:489px;font-size:22px;line-height:22px;color:#444444;transform:scaleX(0.9600);">7</span>
<span class="t" style="left:18.64px;top:522px;font-size:22px;line-height:22px;color:#444444;transform:scaleX(0.9600);">8</span>
<span class="t" style="left:18.16px;top:555px;font-size:22px;line-height:22px;color:#444444;transform:scaleX(0.9600);">9</span>
<span class="t" style="left:12.29px;top:588px;font-size:22px;line-height:22px;color:#444444;transform:scaleX(0.9600);">10</span>
<span class="t" style="left:13.07px;top:621px;font-size:22px;line-height:22px;color:#444444;transform:scaleX(0.9600);">11</span>
<span class="t" style="left:12.29px;top:654px;font-size:22px;line-height:22px;color:#444444;transform:scaleX(0.9600);">12</span>
<span class="t" style="left:12.29px;top:687px;font-size:22px;line-height:22px;color:#444444;transform:scaleX(0.9600);">13</span>
<span class="t" style="left:12.29px;top:720px;font-size:22px;line-height:22px;color:#444444;transform:scaleX(0.9600);">14</span>
<span class="t" style="left:12.29px;top:753px;font-size:22px;line-height:22px;color:#444444;transform:scaleX(0.9600);">15</span>
<span class="t" style="left:12.29px;top:786px;font-size:22px;line-height:22px;color:#444444;transform:scaleX(0.9600);">16</span>
<span class="t" style="left:12.29px;top:819px;font-size:22px;line-height:22px;color:#444444;transform:scaleX(0.9600);">17</span>
<span class="t" style="left:130.00px;top:324px;font-size:22px;line-height:22px;color:#000;transform:scaleX(0.9167);font-weight:700;font-style:italic;">Record</span>
<span class="t" style="left:275.50px;top:324px;font-size:22px;line-height:22px;color:#000;transform:scaleX(0.9318);font-weight:700;font-style:italic;">Product</span>
<span class="t" style="left:419.00px;top:324px;font-size:22px;line-height:22px;color:#000;transform:scaleX(0.9289);font-weight:700;font-style:italic;">SalesRep</span>
<span class="t" style="left:587.90px;top:324px;font-size:22px;line-height:22px;color:#000;transform:scaleX(0.9187);font-weight:700;font-style:italic;">Sales</span>
<span class="t" style="left:108.06px;top:357px;font-size:22px;line-height:22px;color:#000;transform:scaleX(1.0172);">Record 333</span>
<span class="t" style="left:282.93px;top:357px;font-size:22px;line-height:22px;color:#000;transform:scaleX(0.9838);">Galaxy</span>
<span class="t" style="left:437.13px;top:357px;font-size:22px;line-height:22px;color:#000;transform:scaleX(1.0631);">Smith</span>
<span class="t" style="left:596.74px;top:357px;font-size:22px;line-height:22px;color:#000;transform:scaleX(1.0551);">2030.00</span>
<span class="t" style="left:108.06px;top:390px;font-size:22px;line-height:22px;color:#000;transform:scaleX(1.0172);">Record 101</span>
<span class="t" style="left:274.35px;top:390px;font-size:22px;line-height:22px;color:#000;transform:scaleX(0.9853);">Snickers</span>
<span class="t" style="left:442.67px;top:390px;font-size:22px;line-height:22px;color:#000;transform:scaleX(1.0426);">Tony</span>
<span class="t" style="left:596.74px;top:390px;font-size:22px;line-height:22px;color:#000;transform:scaleX(1.0551);">1650.00</span>
<span class="t" style="left:108.06px;top:423px;font-size:22px;line-height:22px;color:#000;transform:scaleX(1.0172);">Record 333</span>
<span class="t" style="left:282.93px;top:423px;font-size:22px;line-height:22px;color:#000;transform:scaleX(0.9838);">Galaxy</span>
<span class="t" style="left:437.13px;top:423px;font-size:22px;line-height:22px;color:#000;transform:scaleX(1.0631);">Smith</span>
<span class="t" style="left:596.74px;top:423px;font-size:22px;line-height:22px;color:#000;transform:scaleX(1.0551);">2030.00</span>
<span class="t" style="left:108.06px;top:456px;font-size:22px;line-height:22px;color:#000;transform:scaleX(1.0172);">Record 245</span>
<span class="t" style="left:291.10px;top:456px;font-size:22px;line-height:22px;color:#000;transform:scaleX(1.0544);">Mars</span>
<span class="t" style="left:439.08px;top:456px;font-size:22px;line-height:22px;color:#000;transform:scaleX(1.0449);">Peter</span>
<span class="t" style="left:597.80px;top:456px;font-size:22px;line-height:22px;color:#000;transform:scaleX(1.0418);">3190.00</span>
<span class="t" style="left:108.06px;top:489px;font-size:22px;line-height:22px;color:#000;transform:scaleX(1.0172);">Record 245</span>
<span class="t" style="left:291.10px;top:489px;font-size:22px;line-height:22px;color:#000;transform:scaleX(1.0544);">Mars</span>
<span class="t" style="left:439.08px;top:489px;font-size:22px;line-height:22px;color:#000;transform:scaleX(1.0449);">Peter</span>
<span class="t" style="left:597.80px;top:489px;font-size:22px;line-height:22px;color:#000;transform:scaleX(1.0418);">3190.00</span>
<span class="t" style="left:108.06px;top:522px;font-size:22px;line-height:22px;color:#000;transform:scaleX(1.0172);">Record 453</span>
<span class="t" style="left:294.39px;top:522px;font-size:22px;line-height:22px;color:#000;transform:scaleX(1.0279);">Twix</span>
<span class="t" style="left:443.88px;top:522px;font-size:22px;line-height:22px;color:#000;transform:scaleX(0.9907);">John</span>
<span class="t" style="left:596.74px;top:522px;font-size:22px;line-height:22px;color:#000;transform:scaleX(1.0551);">7250.00</span>
<span class="t" style="left:108.06px;top:555px;font-size:22px;line-height:22px;color:#000;transform:scaleX(1.0172);">Record 101</span>
<span class="t" style="left:274.35px;top:555px;font-size:22px;line-height:22px;color:#000;transform:scaleX(0.9853);">Snickers</span>
<span class="t" style="left:442.67px;top:555px;font-size:22px;line-height:22px;color:#000;transform:scaleX(1.0426);">Tony</span>
<span class="t" style="left:596.74px;top:555px;font-size:22px;line-height:22px;color:#000;transform:scaleX(1.0551);">1650.00</span>
<span class="t" style="left:108.06px;top:588px;font-size:22px;line-height:22px;color:#000;transform:scaleX(1.0172);">Record 888</span>
<span class="t" style="left:291.10px;top:588px;font-size:22px;line-height:22px;color:#000;transform:scaleX(1.0544);">Mars</span>
<span class="t" style="left:439.08px;top:588px;font-size:22px;line-height:22px;color:#000;transform:scaleX(1.0449);">Peter</span>
<span class="t" style="left:597.80px;top:588px;font-size:22px;line-height:22px;color:#000;transform:scaleX(1.0418);">3190.00</span>
<span class="t" style="left:108.06px;top:621px;font-size:22px;line-height:22px;color:#000;transform:scaleX(1.0172);">Record 245</span>
<span class="t" style="left:291.10px;top:621px;font-size:22px;line-height:22px;color:#000;transform:scaleX(1.0544);">Mars</span>
<span class="t" style="left:439.08px;top:621px;font-size:22px;line-height:22px;color:#000;transform:scaleX(1.0449);">Peter</span>
<span class="t" style="left:597.80px;top:621px;font-size:22px;line-height:22px;color:#000;transform:scaleX(1.0418);">3190.00</span>
<span class="t" style="left:108.06px;top:654px;font-size:22px;line-height:22px;color:#000;transform:scaleX(1.0172);">Record 101</span>
<span class="t" style="left:274.35px;top:654px;font-size:22px;line-height:22px;color:#000;transform:scaleX(0.9853);">Snickers</span>
<span class="t" style="left:442.67px;top:654px;font-size:22px;line-height:22px;color:#000;transform:scaleX(1.0426);">Tony</span>
<span class="t" style="left:596.74px;top:654px;font-size:22px;line-height:22px;color:#000;transform:scaleX(1.0551);">1650.00</span>
<span class="t" style="left:108.06px;top:687px;font-size:22px;line-height:22px;color:#000;transform:scaleX(1.0172);">Record 101</span>
<span class="t" style="left:274.35px;top:687px;font-size:22px;line-height:22px;color:#000;transform:scaleX(0.9853);">Snickers</span>
<span class="t" style="left:442.67px;top:687px;font-size:22px;line-height:22px;color:#000;transform:scaleX(1.0426);">Tony</span>
<span class="t" style="left:596.74px;top:687px;font-size:22px;line-height:22px;color:#000;transform:scaleX(1.0551);">1650.00</span>
<span class="t" style="left:108.06px;top:720px;font-size:22px;line-height:22px;color:#000;transform:scaleX(1.0172);">Record 121</span>
<span class="t" style="left:280.16px;top:720px;font-size:22px;line-height:22px;color:#000;transform:scaleX(1.0603);">Bounty</span>
<span class="t" style="left:443.88px;top:720px;font-size:22px;line-height:22px;color:#000;transform:scaleX(0.9907);">John</span>
<span class="t" style="left:597.80px;top:720px;font-size:22px;line-height:22px;color:#000;transform:scaleX(1.0418);">8750.00</span>
<span class="t" style="left:108.06px;top:753px;font-size:22px;line-height:22px;color:#000;transform:scaleX(1.0172);">Record 245</span>
<span class="t" style="left:291.10px;top:753px;font-size:22px;line-height:22px;color:#000;transform:scaleX(1.0544);">Mars</span>
<span class="t" style="left:439.08px;top:753px;font-size:22px;line-height:22px;color:#000;transform:scaleX(1.0449);">Peter</span>
<span class="t" style="left:597.80px;top:753px;font-size:22px;line-height:22px;color:#000;transform:scaleX(1.0418);">3190.00</span>
<span class="t" style="left:108.06px;top:786px;font-size:22px;line-height:22px;color:#000;transform:scaleX(1.0172);">Record 101</span>
<span class="t" style="left:274.35px;top:786px;font-size:22px;line-height:22px;color:#000;transform:scaleX(0.9853);">Snickers</span>
<span class="t" style="left:442.67px;top:786px;font-size:22px;line-height:22px;color:#000;transform:scaleX(1.0426);">Tony</span>
<span class="t" style="left:596.74px;top:786px;font-size:22px;line-height:22px;color:#000;transform:scaleX(1.0551);">1650.00</span>
<span class="t" style="left:108.06px;top:819px;font-size:22px;line-height:22px;color:#000;transform:scaleX(1.0172);">Record 151</span>
<span class="t" style="left:282.93px;top:819px;font-size:22px;line-height:22px;color:#000;transform:scaleX(0.9838);">Galaxy</span>
<span class="t" style="left:443.88px;top:819px;font-size:22px;line-height:22px;color:#000;transform:scaleX(0.9907);">John</span>
<span class="t" style="left:597.80px;top:819px;font-size:22px;line-height:22px;color:#000;transform:scaleX(1.0418);">8400.00</span>
<span class="t" style="left:846.22px;top:324px;font-size:21.4px;line-height:21.4px;color:#fff;transform:scaleX(0.9772);font-weight:700;">Record</span>
<span class="t" style="left:974.02px;top:324px;font-size:21.4px;line-height:21.4px;color:#fff;transform:scaleX(0.9751);font-weight:700;">Product</span>
<span class="t" style="left:1097.80px;top:324px;font-size:21.4px;line-height:21.4px;color:#fff;transform:scaleX(0.9528);font-weight:700;">SalesRep</span>
<span class="t" style="left:1229.80px;top:324px;font-size:21.4px;line-height:21.4px;color:#fff;transform:scaleX(0.9214);font-weight:700;">Sales</span>
<span class="t" style="left:845.58px;top:356px;font-size:22px;line-height:22px;color:#000;transform:scaleX(1.0172);">Record 333</span>
<span class="t" style="left:973.52px;top:356px;font-size:22px;line-height:22px;color:#000;transform:scaleX(0.9838);">Galaxy</span>
<span class="t" style="left:1096.24px;top:356px;font-size:22px;line-height:22px;color:#000;transform:scaleX(1.0631);">Smith</span>
<span class="t" style="left:1259.34px;top:356px;font-size:22px;line-height:22px;color:#000;transform:scaleX(1.0649);">2030</span>
<span class="t" style="left:845.58px;top:389px;font-size:22px;line-height:22px;color:#000;transform:scaleX(1.0172);">Record 101</span>
<span class="t" style="left:973.51px;top:389px;font-size:22px;line-height:22px;color:#000;transform:scaleX(0.9853);">Snickers</span>
<span class="t" style="left:1097.30px;top:389px;font-size:22px;line-height:22px;color:#000;transform:scaleX(1.0426);">Tony</span>
<span class="t" style="left:1259.34px;top:389px;font-size:22px;line-height:22px;color:#000;transform:scaleX(1.0649);">1650</span>
<span class="t" style="left:845.58px;top:422px;font-size:22px;line-height:22px;color:#000;transform:scaleX(1.0172);">Record 245</span>
<span class="t" style="left:973.45px;top:422px;font-size:22px;line-height:22px;color:#000;transform:scaleX(1.0544);">Mars</span>
<span class="t" style="left:1096.26px;top:422px;font-size:22px;line-height:22px;color:#000;transform:scaleX(1.0449);">Peter</span>
<span class="t" style="left:1260.40px;top:422px;font-size:22px;line-height:22px;color:#000;transform:scaleX(1.0430);">3190</span>
<span class="t" style="left:845.58px;top:455px;font-size:22px;line-height:22px;color:#000;transform:scaleX(1.0172);">Record 453</span>
<span class="t" style="left:974.50px;top:455px;font-size:22px;line-height:22px;color:#000;transform:scaleX(1.0279);">Twix</span>
<span class="t" style="left:1097.30px;top:455px;font-size:22px;line-height:22px;color:#000;transform:scaleX(0.9907);">John</span>
<span class="t" style="left:1259.34px;top:455px;font-size:22px;line-height:22px;color:#000;transform:scaleX(1.0649);">7250</span>
<span class="t" style="left:845.58px;top:488px;font-size:22px;line-height:22px;color:#000;transform:scaleX(1.0172);">Record 888</span>
<span class="t" style="left:973.45px;top:488px;font-size:22px;line-height:22px;color:#000;transform:scaleX(1.0544);">Mars</span>
<span class="t" style="left:1096.26px;top:488px;font-size:22px;line-height:22px;color:#000;transform:scaleX(1.0449);">Peter</span>
<span class="t" style="left:1260.40px;top:488px;font-size:22px;line-height:22px;color:#000;transform:scaleX(1.0430);">3190</span>
<span class="t" style="left:845.58px;top:521px;font-size:22px;line-height:22px;color:#000;transform:scaleX(1.0172);">Record 121</span>
<span class="t" style="left:973.44px;top:521px;font-size:22px;line-height:22px;color:#000;transform:scaleX(1.0603);">Bounty</span>
<span class="t" style="left:1097.30px;top:521px;font-size:22px;line-height:22px;color:#000;transform:scaleX(0.9907);">John</span>
<span class="t" style="left:1260.40px;top:521px;font-size:22px;line-height:22px;color:#000;transform:scaleX(1.0430);">8750</span>
<span class="t" style="left:845.58px;top:554px;font-size:22px;line-height:22px;color:#000;transform:scaleX(1.0172);">Record 151</span>
<span class="t" style="left:973.52px;top:554px;font-size:22px;line-height:22px;color:#000;transform:scaleX(0.9838);">Galaxy</span>
<span class="t" style="left:1097.30px;top:554px;font-size:22px;line-height:22px;color:#000;transform:scaleX(0.9907);">John</span>
<span class="t" style="left:1260.40px;top:554px;font-size:22px;line-height:22px;color:#000;transform:scaleX(1.0430);">8400</span>
<span class="t" style="left:1411.61px;top:272px;font-size:31px;line-height:31px;color:#444;transform:scaleX(0.9878);">Queries &amp; Connections</span>
<span class="t" style="left:1412.60px;top:330px;font-size:17.5px;line-height:17.5px;color:#444;transform:scaleX(0.9383);font-weight:700;">Queries</span>
<span class="t" style="left:1501.80px;top:330px;font-size:17.5px;line-height:17.5px;color:#444;transform:scaleX(1.0007);">Connections</span>
<span class="t" style="left:1412.27px;top:375px;font-size:15.8px;line-height:15.8px;color:#444;transform:scaleX(1.0330);">1 query</span>
<span class="t" style="left:1448.90px;top:421px;font-size:22.4px;line-height:22.4px;color:#555;transform:scaleX(0.8714);">Table1</span>
<span class="t" style="left:1448.30px;top:455px;font-size:19.4px;line-height:19.4px;color:#444;transform:scaleX(0.9974);">7 rows loaded.</span>
</body></html>
